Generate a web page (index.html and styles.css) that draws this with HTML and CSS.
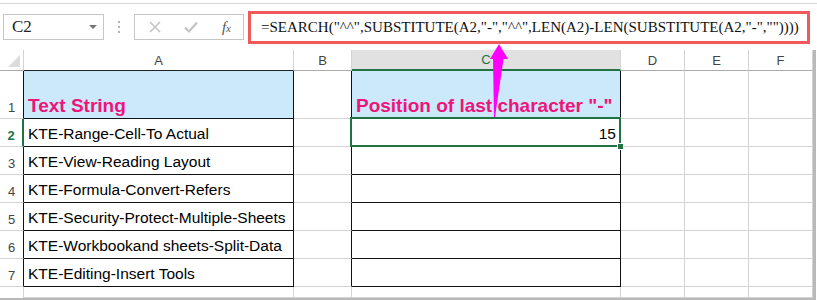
FILE: index.html
```html
<!DOCTYPE html>
<html lang="en">
<head>
    <meta charset="UTF-8">
    <title>SEARCH last character</title>
    <link rel="stylesheet" href="styles.css">
</head>
<body>
    <div class="topline"></div>

    <!-- formula bar -->
    <div class="fbar">
        <div class="namebox">
            <span class="ref">C2</span>
            <span class="drop"></span>
        </div>
        <div class="dots"><i></i><i></i><i></i></div>
        <div class="btns">
            <svg class="ico" width="12" height="12" viewBox="0 0 12 12"><path d="M1 1 L11 11 M11 1 L1 11" stroke="#c4c4c4" stroke-width="1.6" fill="none"/></svg>
            <svg class="ico" width="14" height="12" viewBox="0 0 14 12"><path d="M1 6.5 L5 10.5 L13 1.5" stroke="#c4c4c4" stroke-width="2.2" fill="none"/></svg>
            <span class="fx">f<sub>x</sub></span>
        </div>
        <div class="formula">=SEARCH("^^",SUBSTITUTE(A2,"-","^^",LEN(A2)-LEN(SUBSTITUTE(A2,"-",""))))</div>
    </div>

    <!-- sheet -->
    <div class="sheet">
        <div class="corner"><span class="tri"></span></div>
        <div class="ch ch-a">A</div>
        <div class="ch">B</div>
        <div class="ch ch-sel">C</div>
        <div class="ch">D</div>
        <div class="ch">E</div>
        <div class="ch">F</div>

        <div class="rh rh-b">1</div>
        <div class="cell head bx">Text String</div>
        <div class="cell bl"></div>
        <div class="cell head bx">Position of last character "-"</div>
        <div class="cell"></div><div class="cell"></div><div class="cell"></div>

        <div class="rh rh-sel">2</div>
        <div class="cell bx">KTE-Range-Cell-To Actual</div>
        <div class="cell bl"></div>
        <div class="cell bx num active">15</div>
        <div class="cell"></div><div class="cell"></div><div class="cell"></div>

        <div class="rh rh-b">3</div>
        <div class="cell bx">KTE-View-Reading Layout</div>
        <div class="cell bl"></div>
        <div class="cell bx"></div>
        <div class="cell"></div><div class="cell"></div><div class="cell"></div>

        <div class="rh rh-b">4</div>
        <div class="cell bx">KTE-Formula-Convert-Refers</div>
        <div class="cell bl"></div>
        <div class="cell bx"></div>
        <div class="cell"></div><div class="cell"></div><div class="cell"></div>

        <div class="rh rh-b">5</div>
        <div class="cell bx">KTE-Security-Protect-Multiple-Sheets</div>
        <div class="cell bl"></div>
        <div class="cell bx"></div>
        <div class="cell"></div><div class="cell"></div><div class="cell"></div>

        <div class="rh rh-b">6</div>
        <div class="cell bx">KTE-Workbookand sheets-Split-Data</div>
        <div class="cell bl"></div>
        <div class="cell bx"></div>
        <div class="cell"></div><div class="cell"></div><div class="cell"></div>

        <div class="rh rh-b">7</div>
        <div class="cell bx">KTE-Editing-Insert Tools</div>
        <div class="cell bl"></div>
        <div class="cell bx"></div>
        <div class="cell"></div><div class="cell"></div><div class="cell"></div>

        <div class="rh rh-last"></div>
        <div class="cell"></div>
        <div class="cell"></div>
        <div class="cell"></div>
        <div class="cell"></div><div class="cell"></div><div class="cell"></div>
    </div>

    <!-- callout arrow pointing at the formula -->
    <svg class="arrow" width="22" height="76" viewBox="488 43 22 76">
        <polygon points="499,44 508,59 503.5,59 495,117 494,117 493,59 490,59" fill="#ff00ff"/>
    </svg>
</body>
</html>
```

FILE: styles.css
```css
body {
    margin: 0;
    width: 817px;
    height: 300px;
    overflow: hidden;
    background: #fff;
    font-family: "Liberation Sans", Arial, sans-serif;
    position: relative;
}

.topline {
    height: 3px;
    border-bottom: 1px solid #d4d4d4;
}

/* formula bar */
.fbar {
    height: 46px;
    display: flex;
    align-items: center;
    padding-left: 3px;
}
.namebox {
    width: 101px;
    height: 26px;
    box-sizing: border-box;
    border: 1px solid #c6c6c6;
    display: flex;
    align-items: center;
    justify-content: space-between;
    padding: 0 6px 0 8px;
}
.ref {
    font-family: "Liberation Serif", "Times New Roman", serif;
    font-size: 17px;
    color: #222;
}
.drop {
    width: 0;
    height: 0;
    border-left: 4px solid transparent;
    border-right: 4px solid transparent;
    border-top: 4px solid #777;
}
.dots {
    margin-left: 14px;
    display: flex;
    flex-direction: column;
    gap: 3px;
}
.dots i {
    display: block;
    width: 2px;
    height: 2px;
    background: #b4b4b4;
}
.btns {
    margin-left: 14px;
    width: 110px;
    height: 26px;
    box-sizing: border-box;
    border: 1px solid #c6c6c6;
    display: flex;
    align-items: center;
    justify-content: space-between;
    padding: 0 12px 0 14px;
}
.fx {
    font-family: "Liberation Serif", "Times New Roman", serif;
    font-style: italic;
    font-size: 15px;
    color: #555;
}
.fx sub {
    font-size: 11px;
    vertical-align: 0;
}
.formula {
    margin-left: 4px;
    width: 562px;
    height: 33px;
    box-sizing: border-box;
    border: 3px solid #f0595b;
    padding-left: 10px;
    display: flex;
    align-items: center;
    font-family: "Liberation Serif", "Times New Roman", serif;
    font-size: 15px;
    color: #111;
    white-space: nowrap;
    overflow: hidden;
}

/* sheet grid */
.sheet {
    display: grid;
    grid-template-columns: 24px 270px 58px 269px 64px 64px 64px;
    grid-template-rows: 21px 48px repeat(6, 28px) 11px;
    width: 813px;
    border-right: 3px solid #b9b9b9;
    border-bottom: 3px solid #b9b9b9;
}
.corner {
    box-sizing: border-box;
    border-right: 1px solid #d4d4d4;
    border-bottom: 1px solid #ababab;
    display: flex;
    justify-content: flex-end;
    align-items: flex-end;
    padding: 0 3px 3px 0;
}
.tri {
    width: 12px;
    height: 12px;
    background: #dcdcdc;
    clip-path: polygon(100% 0, 100% 100%, 0 100%);
}
.ch {
    box-sizing: border-box;
    border-right: 1px solid #d4d4d4;
    border-bottom: 1px solid #ababab;
    display: flex;
    align-items: flex-end;
    justify-content: center;
    padding-bottom: 2px;
    font-size: 13px;
    color: #444;
}
.ch-a {
    border-bottom-color: #222;
}
.ch-sel {
    background: #e1e1e1;
    color: #217346;
    border-bottom: 2px solid #217346;
}
.rh {
    box-sizing: border-box;
    border-right: 1px solid #d4d4d4;
    border-bottom: 1px solid #d4d4d4;
    display: flex;
    align-items: flex-end;
    justify-content: center;
    padding-bottom: 3px;
    font-size: 13px;
    color: #444;
}
.rh-b {
    border-right-color: #111;
}
.rh-sel {
    border-right: 2px solid #217346;
    color: #217346;
    font-weight: bold;
}
.rh-last {
    border-bottom: none;
}
.cell {
    box-sizing: border-box;
    border-right: 1px solid #d4d4d4;
    border-bottom: 1px solid #d4d4d4;
    display: flex;
    align-items: flex-end;
    padding: 0 4px 3px;
    font-size: 15.5px;
    color: #000;
    white-space: nowrap;
}
.bx {
    border-right-color: #111;
    border-bottom-color: #111;
}
.bl {
    border-right-color: #111;
}
.head {
    background: #cce9fb;
    color: #f0147a;
    font-weight: bold;
    font-size: 19px;
    padding-bottom: 1px;
}
.num {
    justify-content: flex-end;
}
.active {
    position: relative;
}
.active::before {
    content: "";
    position: absolute;
    top: -2px;
    left: -2px;
    right: -1px;
    bottom: -1px;
    border: 2px solid #217346;
}
.active::after {
    content: "";
    position: absolute;
    right: -4px;
    bottom: -4px;
    width: 5px;
    height: 5px;
    background: #217346;
    border: 1px solid #fff;
}

.arrow {
    position: absolute;
    left: 488px;
    top: 43px;
}
```
